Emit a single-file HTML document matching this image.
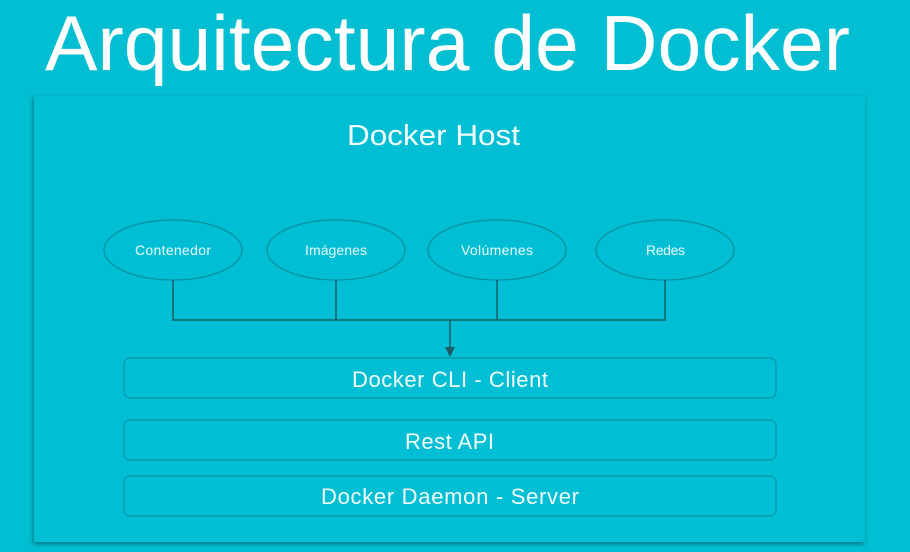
<!DOCTYPE html>
<html><head><meta charset="utf-8"><style>
html,body{margin:0;padding:0;width:910px;height:552px;overflow:hidden;background:#02bed3;}
svg{display:block}
</style></head><body>
<svg width="910" height="552" xmlns="http://www.w3.org/2000/svg" font-family="Liberation Sans, sans-serif">
<defs><filter id="sh" x="-5%" y="-5%" width="110%" height="110%"><feDropShadow dx="-1" dy="2" stdDeviation="2.5" flood-color="#00545e" flood-opacity="0.7"/></filter></defs>
<rect width="910" height="552" fill="#02bed3"/>
<text x="45" y="70" font-size="78" fill="#fff" textLength="805" lengthAdjust="spacingAndGlyphs">Arquitectura de Docker</text>
<rect x="34" y="96" width="831" height="446" fill="#02bed3" filter="url(#sh)"/>
<text x="347" y="145" font-size="29" fill="#f2fdff" textLength="173" lengthAdjust="spacingAndGlyphs">Docker Host</text>
<g fill="none" stroke="#0a8f9f" stroke-width="1.2">
<ellipse cx="173" cy="250" rx="69" ry="30"/>
<ellipse cx="336" cy="250" rx="69" ry="30"/>
<ellipse cx="497" cy="250" rx="69" ry="30"/>
<ellipse cx="665" cy="250" rx="69" ry="30"/>
</g>
<g fill="none" stroke="#1c5b63" stroke-width="1.5">
<path d="M173 280V320H665V280M336 280V320M497 280V320M450 320V349"/>
</g>
<path d="M445 347L455 347L450 357Z" fill="#1c5b63"/>
<g font-size="14" fill="#e8fbff" lengthAdjust="spacingAndGlyphs">
<text x="135" y="255" textLength="76">Contenedor</text>
<text x="305" y="255" textLength="62">Imágenes</text>
<text x="461" y="255" textLength="72">Volúmenes</text>
<text x="646" y="255" textLength="39">Redes</text>
</g>
<g fill="none" stroke="#0a97a8" stroke-width="1.2">
<rect x="124" y="358" width="652" height="40" rx="6"/>
<rect x="124" y="420" width="652" height="40" rx="6"/>
<rect x="124" y="476" width="652" height="40" rx="6"/>
</g>
<g font-size="22" fill="#f2fdff" lengthAdjust="spacingAndGlyphs">
<text x="352" y="387" textLength="196">Docker CLI - Client</text>
<text x="405" y="449" textLength="89">Rest API</text>
<text x="321" y="504" textLength="258">Docker Daemon - Server</text>
</g>
</svg>
</body></html>
